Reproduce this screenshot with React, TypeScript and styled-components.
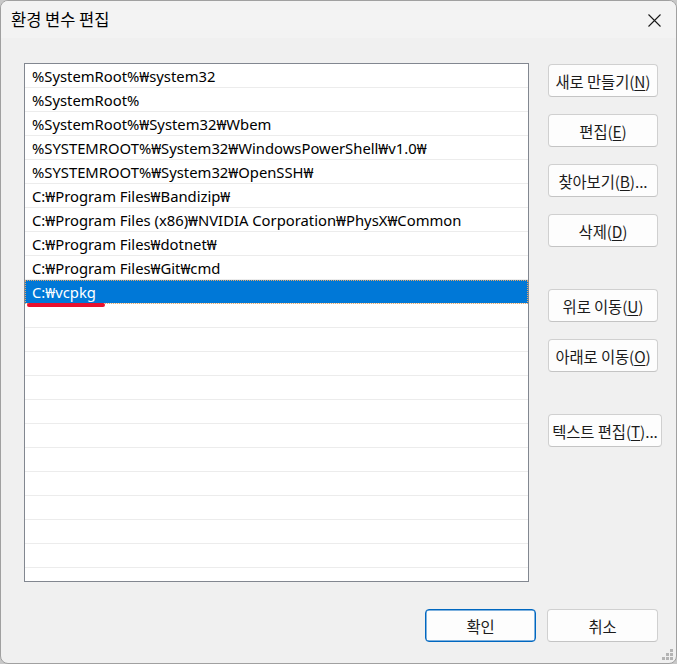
import React from "react";
import styled, { createGlobalStyle } from "styled-components";

const Global = createGlobalStyle`
  html, body { margin: 0; padding: 0; width: 677px; height: 664px; overflow: hidden; background: #c8c8c8; }
  * { box-sizing: border-box; }
  body { font-family: "Noto Sans", "Noto Sans CJK KR", sans-serif; color: #000; }
`;

const Window = styled.div`
  position: relative;
  width: 677px;
  height: 664px;
  border: 1px solid #a0a0a0;
  border-radius: 8px;
  background: #f0f0f0;
  display: flex;
  flex-direction: column;
  overflow: hidden;
`;

const TitleBar = styled.div`
  height: 37px;
  flex: none;
  background: #f3f3f3;
  display: flex;
  align-items: center;
  justify-content: space-between;
  padding: 0 15px 0 10px;
`;

const Title = styled.div`
  font-family: "Noto Sans CJK KR", sans-serif;
  font-size: 16.5px;
  line-height: 20px;
  color: #000;
  margin-top: -2px;
`;

const CloseButton = styled.div`
  width: 13px;
  height: 13px;
  display: flex;
  margin-top: 1px;
`;

const Body = styled.div`
  flex: 1;
  display: flex;
  flex-direction: column;
  padding: 25px 18px 0 23px;
`;

const Main = styled.div`
  display: flex;
  gap: 19px;
`;

const List = styled.div`
  flex: none;
  width: 505px;
  height: 519px;
  border: 1px solid #828790;
  background: #fff;
  overflow: hidden;
`;

const Row = styled.div<{ $selected?: boolean }>`
  position: relative;
  height: 24px;
  border-bottom: 1px solid #ececec;
  padding-left: 7px;
  padding-top: 1px;
  display: flex;
  align-items: center;
  font-size: 14.8px;
  white-space: nowrap;
  color: ${(p) => (p.$selected ? "#fff" : "#000")};
  background: ${(p) => (p.$selected ? "#0078d7" : "transparent")};
  outline: ${(p) => (p.$selected ? "1px dotted #e8a868" : "none")};
  outline-offset: -1px;
`;

const RowText = styled.span``;

const Annotation = styled.div`
  position: absolute;
  left: 2px;
  top: 23px;
  width: 78px;
  height: 4px;
  border-radius: 2px;
  background: #e8112d;
  z-index: 2;
`;

const Side = styled.div`
  flex: none;
  width: 110px;
  display: flex;
  flex-direction: column;
  align-items: flex-start;
  padding-top: 1px;
`;

const Button = styled.div<{ $width?: number; $gap?: number; $default?: boolean }>`
  flex: none;
  width: ${(p) => p.$width ?? 110}px;
  height: 33px;
  margin-top: ${(p) => p.$gap ?? 0}px;
  background: #fdfdfd;
  border: 1px solid ${(p) => (p.$default ? "#0067c0" : "#d0d0d0")};
  border-bottom-color: ${(p) => (p.$default ? "#0067c0" : "#c4c4c4")};
  box-shadow: ${(p) => (p.$default ? "inset 0 0 0 0.5px #0067c0" : "none")};
  border-radius: 4px;
  display: flex;
  align-items: center;
  justify-content: center;
  font-family: "Noto Sans CJK KR", sans-serif;
  font-size: 15.4px;
  color: #1b1b1b;
  white-space: nowrap;
  letter-spacing: -0.1px;
  u { text-decoration: underline; text-underline-offset: 2px; }
`;

const Footer = styled.div`
  display: flex;
  justify-content: flex-end;
  gap: 11px;
  margin-top: 27px;
`;

const Grip = styled.svg`
  position: absolute;
  right: 2px;
  bottom: 2px;
`;

const items = [
  "%SystemRoot%₩system32",
  "%SystemRoot%",
  "%SystemRoot%₩System32₩Wbem",
  "%SYSTEMROOT%₩System32₩WindowsPowerShell₩v1.0₩",
  "%SYSTEMROOT%₩System32₩OpenSSH₩",
  "C:₩Program Files₩Bandizip₩",
  "C:₩Program Files (x86)₩NVIDIA Corporation₩PhysX₩Common",
  "C:₩Program Files₩dotnet₩",
  "C:₩Program Files₩Git₩cmd",
  "C:₩vcpkg",
];

export default function App() {
  const rows = [...items, ...Array(12).fill("")];
  return (
    <>
      <Global />
      <Window>
        <TitleBar>
          <Title>환경 변수 편집</Title>
          <CloseButton>
            <svg width="13" height="13" viewBox="0 0 13 13">
              <path d="M0.5 0.5 L12.5 12.5 M12.5 0.5 L0.5 12.5" stroke="#1a1a1a" strokeWidth="1.1" fill="none" />
            </svg>
          </CloseButton>
        </TitleBar>
        <Body>
          <Main>
            <List>
              {rows.map((t, i) => (
                <Row key={i} $selected={i === 9}>
                  <RowText>{t}</RowText>
                  {i === 9 && <Annotation />}
                </Row>
              ))}
            </List>
            <Side>
              <Button>새로 만들기(<u>N</u>)</Button>
              <Button $gap={17}>편집(<u>E</u>)</Button>
              <Button $gap={17}>찾아보기(<u>B</u>)...</Button>
              <Button $gap={17}>삭제(<u>D</u>)</Button>
              <Button $gap={42}>위로 이동(<u>U</u>)</Button>
              <Button $gap={17}>아래로 이동(<u>O</u>)</Button>
              <Button $gap={42} $width={114}>텍스트 편집(<u>T</u>)...</Button>
            </Side>
          </Main>
          <Footer>
            <Button $default $width={111}>확인</Button>
            <Button $width={111}>취소</Button>
          </Footer>
        </Body>
        <Grip width="12" height="12" viewBox="0 0 12 12">
          <rect x="8" y="0" width="3" height="3" fill="#b4b4b4" />
          <rect x="4" y="4" width="3" height="3" fill="#b4b4b4" />
          <rect x="8" y="4" width="3" height="3" fill="#b4b4b4" />
          <rect x="0" y="8" width="3" height="3" fill="#b4b4b4" />
          <rect x="4" y="8" width="3" height="3" fill="#b4b4b4" />
          <rect x="8" y="8" width="3" height="3" fill="#b4b4b4" />
        </Grip>
      </Window>
    </>
  );
}
